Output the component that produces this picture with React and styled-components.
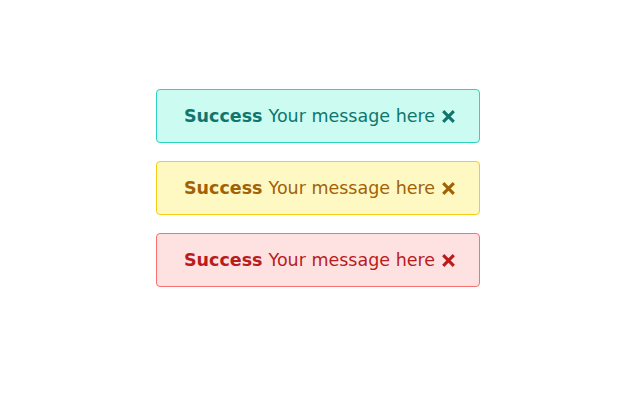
import React from "react";
import styled, { createGlobalStyle } from "styled-components";

const GlobalStyle = createGlobalStyle`
    body {
        margin: 0;
        background: #fff;
        font-family: "DejaVu Sans", sans-serif;
    }
`;

const variants = {
    teal: { bg: "#ccfbf1", border: "#2dd4bf", text: "#0f766e" },
    yellow: { bg: "#fef9c3", border: "#facc15", text: "#a16207" },
    red: { bg: "#fee2e2", border: "#f87171", text: "#b91c1c" },
};

const CloseIcon = () => (
    <svg width="15" height="15" viewBox="0 0 15 15">
        <path
            d="M2.2 2.2 L12.8 12.8 M12.8 2.2 L2.2 12.8"
            stroke="currentColor"
            strokeWidth="3.1"
            strokeLinecap="butt"
            fill="none"
        />
    </svg>
);

const Alert = ({ variant }) => (
    <AlertBox $v={variants[variant]}>
        <Title>Success</Title>
        <Message>Your message here</Message>
        <CloseBtn>
            <CloseIcon />
        </CloseBtn>
    </AlertBox>
);

export default function App() {
    return (
        <>
            <GlobalStyle />
            <Page>
                <Alert variant="teal" />
                <Alert variant="yellow" />
                <Alert variant="red" />
            </Page>
        </>
    );
}

const Page = styled.div`
    display: flex;
    flex-direction: column;
    align-items: center;
    gap: 18px;
    padding-top: 89px;
    padding-left: 11px;
    width: 625px;
    box-sizing: border-box;
`;

const AlertBox = styled.div`
    width: 324px;
    height: 54px;
    box-sizing: border-box;
    display: flex;
    align-items: center;
    padding: 0 24px 0 27px;
    background: ${(p) => p.$v.bg};
    border: 1px solid ${(p) => p.$v.border};
    border-radius: 4px;
    color: ${(p) => p.$v.text};
    font-size: 17.5px;
`;

const Title = styled.span`
    font-weight: bold;
    margin-right: 6px;
`;

const Message = styled.span`
    white-space: nowrap;
`;

const CloseBtn = styled.span`
    display: flex;
    align-items: center;
    margin-left: 6px;
`;
